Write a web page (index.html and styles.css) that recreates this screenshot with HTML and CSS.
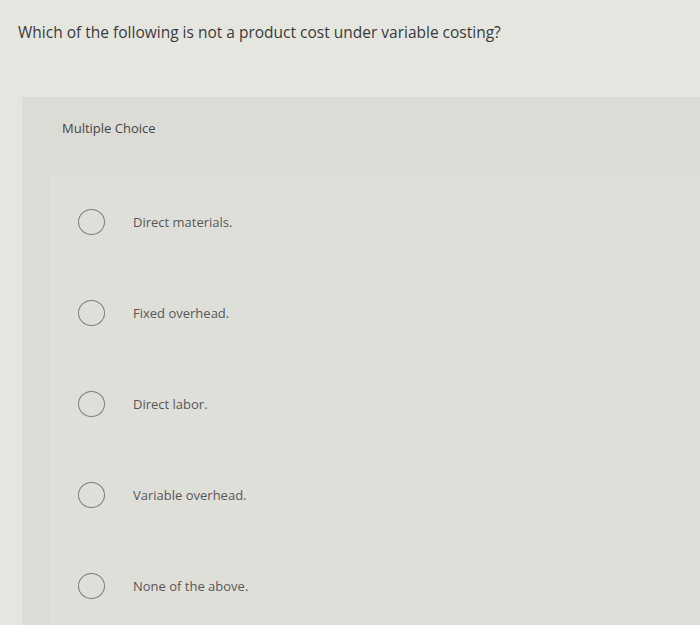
FILE: index.html
```html
<!DOCTYPE html>
<html lang="en">
<head>
<meta charset="utf-8">
<title>Multiple Choice</title>
<link rel="stylesheet" href="styles.css">
</head>
<body>
<div class="page">
  <p class="question">Which of the following is not a product cost under variable costing?</p>
  <section class="panel">
    <h2 class="panel-title">Multiple Choice</h2>
    <ul class="options">
      <li class="option"><span class="radio"></span><span class="label">Direct materials.</span></li>
      <li class="option"><span class="radio"></span><span class="label">Fixed overhead.</span></li>
      <li class="option"><span class="radio"></span><span class="label">Direct labor.</span></li>
      <li class="option"><span class="radio"></span><span class="label">Variable overhead.</span></li>
      <li class="option"><span class="radio"></span><span class="label">None of the above.</span></li>
    </ul>
  </section>
</div>
</body>
</html>
```

FILE: styles.css
```css
html, body {
  margin: 0;
  padding: 0;
}
body {
  background: #e6e6e1;
  font-family: "Open Sans", Lato, "Liberation Sans", sans-serif;
  color: #3c3c3c;
  height: 625px;
  overflow: hidden;
}
.page {
  display: flex;
  flex-direction: column;
  height: 625px;
}
.question {
  margin: 0;
  padding: 22px 0 0 18px;
  height: 97px;
  box-sizing: border-box;
  font-size: 15.5px;
  line-height: 20px;
  color: #3a3a3a;
  flex: none;
}
.panel {
  flex: 1;
  margin-left: 22px;
  background: #dcdcd7;
  padding-top: 22px;
}
.panel-title {
  margin: 0 0 0 40px;
  font-size: 13px;
  line-height: 18px;
  font-weight: normal;
  color: #454545;
}
.options {
  list-style: none;
  margin: 39px 0 0 28px;
  padding: 0;
  background: #dfdfda;
}
.option {
  display: flex;
  align-items: center;
  height: 91px;
  padding-left: 28px;
  gap: 28px;
}
.radio {
  width: 25px;
  height: 24px;
  border: 1.5px solid #7d7d7d;
  border-radius: 50%;
  flex: none;
}
.label {
  font-size: 13px;
  color: #575757;
}
```
